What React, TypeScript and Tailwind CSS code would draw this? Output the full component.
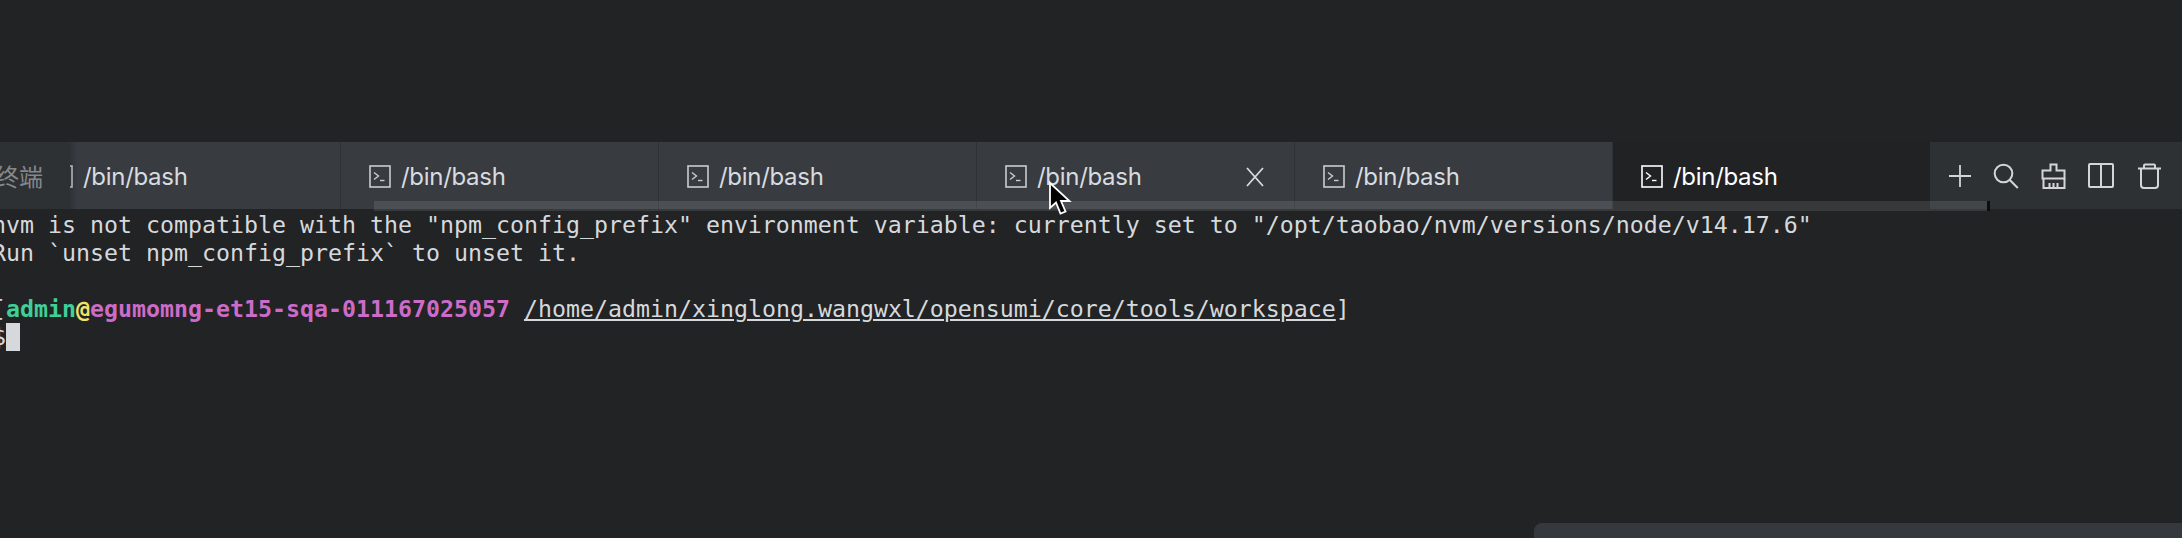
const tabs = [0, 1, 2, 3, 4, 5];

function TermIcon({ active }: { active?: boolean }) {
  return (
    <svg width="22" height="23" viewBox="0 0 22 23" fill="none" stroke="currentColor" className={active ? "shrink-0 text-white" : "shrink-0 text-[#c9ccd0]"}>
      <rect x="1" y="1" width="20" height="21" strokeWidth="1.6" />
      <path d="M5 7.5l4.5 3.5L5 14.5" strokeWidth="1.4" />
      <path d="M11 15.5h4.5" strokeWidth="1.4" />
    </svg>
  );
}

function MousePointer() {
  return (
    <svg width="24" height="36" viewBox="0 0 24 36" className="absolute left-[1048px] top-[181px]">
      <path d="M2 2v25l6-5.5 4.5 11 5-2-4.5-10.5h8.5z" fill="#000" stroke="#fff" strokeWidth="1.8" />
    </svg>
  );
}

export default function App() {
  return (
    <div className="relative h-[538px] w-[2182px] overflow-hidden bg-[#222325] pt-[142px] font-['Inter','Liberation_Sans',sans-serif]">
      {/* tab bar */}
      <div className="relative flex h-[67px] bg-[#2e3134]">
        <div className="flex w-[70px] shrink-0 items-center justify-end overflow-hidden whitespace-nowrap pr-[27px] pt-[1px] text-[24px] text-[#85888b] font-['Noto_Sans_CJK_SC',sans-serif]">
          终端
        </div>
        <div className="relative flex w-[1860px] shrink-0 overflow-hidden">
          {tabs.map((t) => {
            const active = t === 5;
            return (
              <div
                key={t}
                className={
                  (active ? "bg-[#212224] text-white " : "border-r border-[#2e3135] bg-[#383b40] text-[#d8dbdf] ") +
                  (t === 0 ? "-ml-[47px] " : "") +
                  "flex h-full w-[318px] shrink-0 items-center pl-[28px] pt-[2px] text-[24px]"
                }
              >
                <TermIcon active={active} />
                <span className="ml-[10px] tracking-[-0.3px]">/bin/bash</span>
                {t === 3 && (
                  <svg width="20" height="20" viewBox="0 0 20 20" fill="none" stroke="#d8dbdf" strokeWidth="1.8" className="ml-auto mr-[29px] shrink-0">
                    <path d="M2 1l16 18M18 1L2 19" />
                  </svg>
                )}
              </div>
            );
          })}
          {/* scroll shadow on the left edge of the strip */}
          <div className="absolute inset-y-0 left-0 w-[8px] bg-gradient-to-r from-black/15 to-transparent" />
        </div>
        {/* actions */}
        <div className="flex flex-1 items-center gap-[22px] pl-[18px] text-[#d3d6d9]">
          <svg width="24" height="24" viewBox="0 0 24 24" fill="none" stroke="currentColor" strokeWidth="1.8">
            <path d="M12 1v22M1 12h22" />
          </svg>
          <svg width="26" height="26" viewBox="0 0 26 26" fill="none" stroke="currentColor" strokeWidth="2" className="-ml-[1px]">
            <circle cx="10.5" cy="10.5" r="8.8" />
            <path d="M16.8 17l8 8" />
          </svg>
          <svg width="25" height="26" viewBox="0 0 25 26" fill="none" stroke="currentColor" strokeWidth="2">
            <path d="M9.5 7.5V1.5h6v6h8v8h-22v-8z" />
            <path d="M2.5 15.5V25h21V15.5M8.5 25v-5M12.5 25v-5M16.5 25v-5" />
          </svg>
          <svg width="26" height="25" viewBox="0 0 26 25" fill="none" stroke="currentColor" strokeWidth="2">
            <rect x="1" y="1" width="24" height="23" rx="1" />
            <path d="M13 1v23" />
          </svg>
          <svg width="25" height="26" viewBox="0 0 25 26" fill="none" stroke="currentColor" strokeWidth="2" className="ml-[1px]">
            <path d="M1 5.5h23M7 5.5V2.5q0-1 1-1h9q1 0 1 1v3" />
            <path d="M4 5.5V22q0 3 3 3h11q3 0 3-3V5.5" />
          </svg>
        </div>
        {/* overlay scrollbar */}
        <div className="absolute left-[374px] top-[59px] h-[10px] w-[1616px] border-r-[3px] border-[#0c0d0e] bg-white/10" />
      </div>

      {/* terminal output */}
      <div className="-ml-[8px] mt-[2px] whitespace-pre font-['DejaVu_Sans_Mono',monospace] text-[23.25px] leading-[28px] text-[#d6d9dc]">
        <div>nvm is not compatible with the "npm_config_prefix" environment variable: currently set to "/opt/taobao/nvm/versions/node/v14.17.6"</div>
        <div>Run `unset npm_config_prefix` to unset it.</div>
        <div>&nbsp;</div>
        <div>
          [<span className="font-bold text-[#3fcf98]">admin</span>
          <span className="font-bold text-[#f0e26a]">@</span>
          <span className="font-bold text-[#cc6cc8]">egumomng-et15-sqa-011167025057</span>{" "}
          <span className="underline">/home/admin/xinglong.wangwxl/opensumi/core/tools/workspace</span>]
        </div>
        <div className="flex">
          <span>$</span>
          <span className="h-[28px] w-[14px] bg-[#d6d9dc]" />
        </div>
      </div>

      <MousePointer />
      {/* panel peeking at the bottom corner */}
      <div className="absolute bottom-0 left-[1534px] right-0 h-[15px] rounded-tl-[8px] bg-[#35383c]" />
    </div>
  );
}
